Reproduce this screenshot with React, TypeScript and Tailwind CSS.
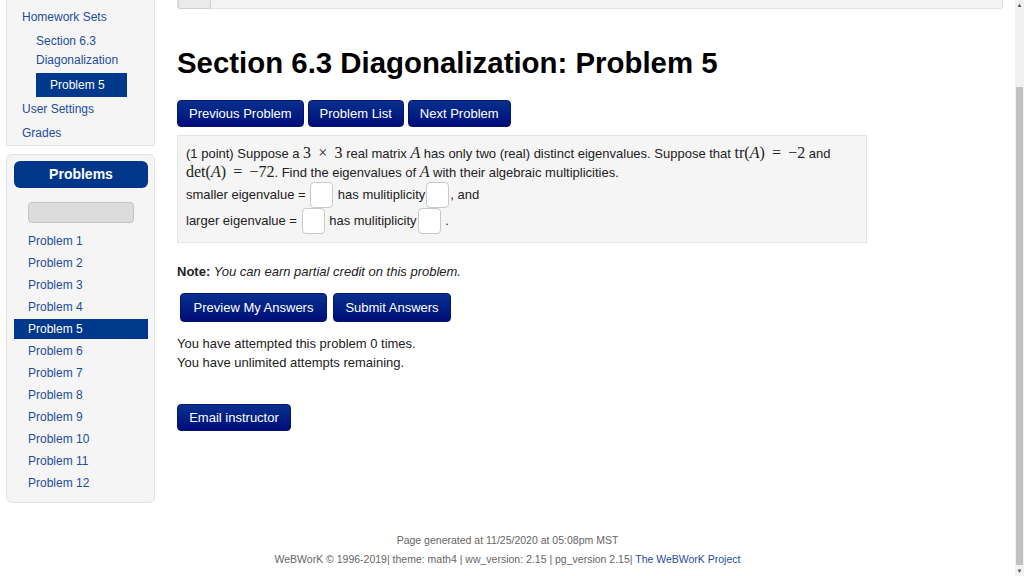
const problems = Array.from({ length: 12 }, (_, i) => i + 1);

function NavButton({ label, className = "" }: { label: string; className?: string }) {
  return (
    <button
      className={`rounded-[4px] border border-[#001470] bg-gradient-to-b from-[#0a2f8e] to-[#000c79] px-[11px] text-[13px] text-white ${className}`}
    >
      {label}
    </button>
  );
}

function AnswerBox() {
  return (
    <span className="mx-[1px] inline-block h-[26px] w-[23px] rounded-[4px] border border-[#c8c8c8] bg-white align-middle" />
  );
}

function M({ children, italic }: { children: React.ReactNode; italic?: boolean }) {
  return (
    <span className={`font-['Liberation_Serif',serif] text-[16px] ${italic ? "italic" : ""}`}>
      {children}
    </span>
  );
}

function Sidebar() {
  return (
    <div className="flex w-[149px] flex-col gap-[8px] text-[12px] text-[#1f4d9b]">
      {/* top nav */}
      <div className="border border-t-0 border-[#e3e3e3] bg-[#f5f5f5] pt-[5px]">
        <div className="pl-[15px] leading-[24px]">Homework Sets</div>
        <div className="py-[3px] pl-[29px] leading-[19px]">
          Section 6.3
          <br />
          Diagonalization
        </div>
        <div className="ml-[29px] w-[91px] bg-[#00388c] pl-[14px] leading-[24px] text-white">
          Problem 5
        </div>
        <div className="pl-[15px] leading-[24px]">User Settings</div>
        <div className="pl-[15px] leading-[24px]">Grades</div>
      </div>

      {/* problems list */}
      <div className="rounded-[6px] border border-[#e3e3e3] bg-[#f5f5f5] pt-[6px] pr-[6px] pb-[8px] pl-[7px]">
        <div className="flex h-[27px] items-center justify-center rounded-[6px] bg-[#00378a] text-[14px] font-bold text-white">
          Problems
        </div>
        <div className="mt-[14px] ml-[14px] h-[21px] w-[106px] rounded-[4px] border border-[#c4c4c4] bg-[#dcdcdc]" />
        <div className="mt-[7px]">
          {problems.map((n) => (
            <div key={n} className="py-[1px]">
              <div
                className={`h-[20px] pl-[14px] leading-[20px] ${
                  n === 5 ? "bg-[#00388c] text-white" : ""
                }`}
              >
                Problem {n}
              </div>
            </div>
          ))}
        </div>
      </div>
    </div>
  );
}

function Main() {
  return (
    <div className="flex w-[826px] flex-col text-[13px] text-[#222]">
      {/* top bar, scrolled mostly out of view */}
      <div className="flex h-[9px] rounded-b-[3px] border border-t-0 border-[#e2e2e2] bg-[#f3f3f3]">
        <div className="h-[9px] w-[33px] rounded-b-[3px] border border-t-0 border-[#cfcfcf] bg-[#ebebeb]" />
      </div>

      <h1 className="mt-[37px] text-[29.4px] leading-[34px] font-bold text-black">
        Section 6.3 Diagonalization: Problem 5
      </h1>

      <div className="mt-[20px] flex gap-[4px]">
        <NavButton label="Previous Problem" className="h-[27px]" />
        <NavButton label="Problem List" className="h-[27px]" />
        <NavButton label="Next Problem" className="h-[27px]" />
      </div>

      <div className="mt-[8px] w-[690px] border border-[#e5e5e5] bg-[#f5f5f5] px-[8px] py-[8px] leading-[18px]">
        <div>
          (1 point) Suppose a <M>3 &thinsp;×&thinsp; 3</M> real matrix <M italic>A</M> has only two (real)
          distinct eigenvalues. Suppose that <M>tr(<i>A</i>) &thinsp;= &thinsp;−2</M> and
          <br />
          <M>det(<i>A</i>) &thinsp;= &thinsp;−72</M>. Find the eigenvalues of <M italic>A</M> with their
          algebraic multiplicities.
        </div>
        <div className="flex h-[26px] items-center">
          smaller eigenvalue =&nbsp;
          <AnswerBox />
          &nbsp;has mulitiplicity
          <AnswerBox />, and
        </div>
        <div className="flex h-[26px] items-center">
          larger eigenvalue =&nbsp;
          <AnswerBox />
          &nbsp;has mulitiplicity
          <AnswerBox />&nbsp;.
        </div>
      </div>

      <div className="mt-[20px] leading-[18px]">
        <b>Note:</b> <i>You can earn partial credit on this problem.</i>
      </div>

      <div className="mt-[12px] ml-[3px] flex gap-[6px]">
        <NavButton label="Preview My Answers" className="h-[29px] w-[147px] px-0" />
        <NavButton label="Submit Answers" className="h-[29px] w-[118px] px-0" />
      </div>

      <div className="mt-[12px] leading-[19px]">
        You have attempted this problem 0 times.
        <br />
        You have unlimited attempts remaining.
      </div>

      <div className="mt-[32px]">
        <NavButton label="Email instructor" className="h-[27px] w-[114px] px-0" />
      </div>
    </div>
  );
}

function Scrollbar() {
  return (
    <div className="flex h-[576px] w-[9px] flex-col bg-[#f1f1f1]">
      <div className="flex h-[87px] justify-center pt-[2px] text-[6px] leading-[6px] text-[#555]">▲</div>
      <div className="mx-[1px] h-[478px] bg-[#c1c1c1]" />
      <div className="flex flex-1 items-end justify-center pb-[2px] text-[6px] leading-[6px] text-[#555]">▼</div>
    </div>
  );
}

export default function App() {
  return (
    <div className="flex h-[576px] w-[1024px] overflow-hidden bg-white font-['Liberation_Sans',Arial,sans-serif]">
      <div className="flex flex-1 flex-col">
        <div className="flex gap-[22px] pl-[6px]">
          <Sidebar />
          <Main />
        </div>

        {/* footer */}
        <div className="mt-[28px] text-center text-[10.5px] leading-[19px] text-[#666]">
          <div>Page generated at 11/25/2020 at 05:08pm MST</div>
          <div>
            WeBWorK © 1996-2019| theme: math4 | ww_version: 2.15 | pg_version 2.15|{" "}
            <span className="text-[#1f4d9b]">The WeBWorK Project</span>
          </div>
        </div>
      </div>
      <Scrollbar />
    </div>
  );
}
